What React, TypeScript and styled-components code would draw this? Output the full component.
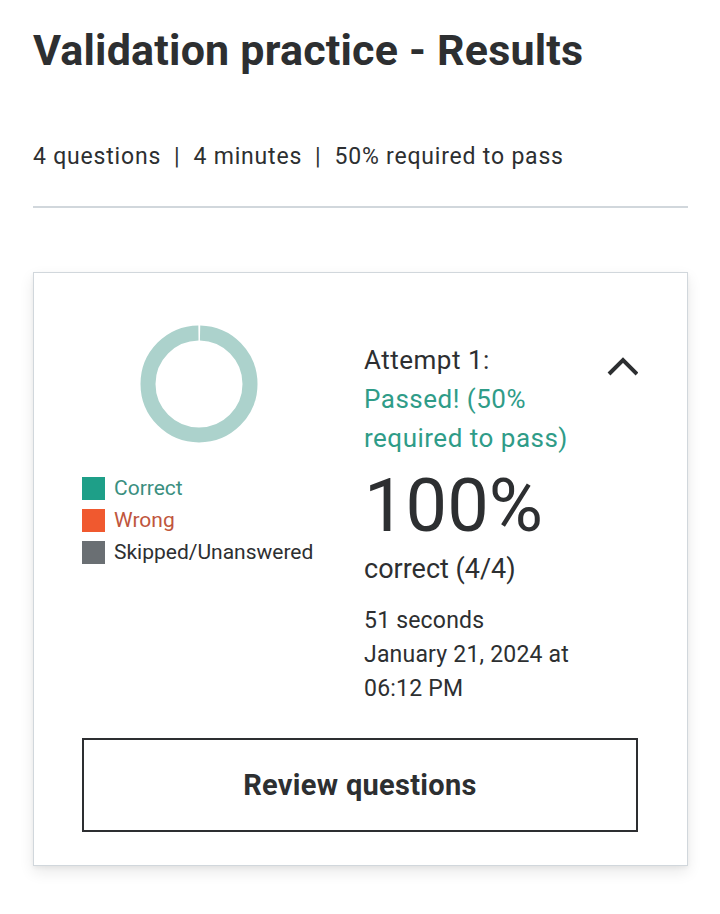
import React from "react";
import styled, { createGlobalStyle } from "styled-components";

const GlobalStyle = createGlobalStyle`
  html, body {
    margin: 0;
    padding: 0;
    background: #ffffff;
  }
  body {
    font-family: Roboto, "Liberation Sans", sans-serif;
    color: #2d2f31;
  }
`;

const Page = styled.div`
  padding: 24px 32px 40px 33px;
`;

const Title = styled.h1`
  margin: 0;
  font-size: 43px;
  line-height: 52px;
  font-weight: 700;
  letter-spacing: 0.2px;
  color: #2d2f31;
`;

const Meta = styled.div`
  display: flex;
  align-items: center;
  margin-top: 67px;
  font-size: 23px;
  line-height: 28px;
  letter-spacing: 0.8px;
  color: #2d2f31;
`;

const Sep = styled.span`
  margin: 0 13px;
`;

const Divider = styled.hr`
  margin: 35px 0 0;
  border: none;
  border-top: 2px solid #d1d7dc;
`;

const Card = styled.section`
  margin-top: 64px;
  border: 1px solid #d1d7dc;
  box-shadow: 0 6px 14px rgba(0, 0, 0, 0.09), 0 2px 4px rgba(0, 0, 0, 0.05);
  padding: 52px 49px 33px 48px;
  background: #fff;
`;

const Summary = styled.div`
  display: grid;
  grid-template-columns: 234px 1fr;
  column-gap: 48px;
`;

const ChartCol = styled.div`
  display: flex;
  flex-direction: column;
`;

const DonutWrap = styled.div`
  display: flex;
  justify-content: center;
`;

const Legend = styled.ul`
  list-style: none;
  margin: 34px 0 0;
  padding: 0;
  display: flex;
  flex-direction: column;
  gap: 9px;
`;

const LegendItem = styled.li<{ $text: string }>`
  display: flex;
  align-items: center;
  gap: 9px;
  font-size: 21px;
  line-height: 23px;
  color: ${(p) => p.$text};
  white-space: nowrap;
`;

const Swatch = styled.span<{ $color: string }>`
  width: 23px;
  height: 23px;
  background: ${(p) => p.$color};
  flex: none;
`;

const ResultCol = styled.div`
  position: relative;
  padding-top: 16px;
`;

const Heading = styled.div`
  font-size: 26px;
  line-height: 39px;
  letter-spacing: 0.5px;
  color: #2d2f31;
  padding-right: 50px;
`;

const Passed = styled.span`
  display: block;
  color: #2f9c88;
`;

const Toggle = styled.button`
  position: absolute;
  top: 24px;
  right: 0;
  width: 34px;
  height: 36px;
  border: none;
  background: none;
  padding: 0;
  display: flex;
  align-items: center;
  justify-content: center;
  cursor: pointer;
`;

const Score = styled.div`
  margin-top: 12px;
  font-size: 74px;
  line-height: 72px;
  font-weight: 400;
  letter-spacing: 0;
  color: #2d2f31;
`;

const ScoreLabel = styled.div`
  margin-top: 10px;
  font-size: 27px;
  line-height: 34px;
`;

const Details = styled.div`
  margin-top: 18px;
  font-size: 23px;
  line-height: 34px;
  letter-spacing: 0.2px;
`;

const ReviewButton = styled.button`
  display: block;
  margin-top: 32px;
  width: 100%;
  height: 94px;
  background: #fff;
  border: 2px solid #2d2f31;
  font-family: Roboto, "Liberation Sans", sans-serif;
  font-size: 29px;
  font-weight: 700;
  color: #2d2f31;
  letter-spacing: 0.3px;
  cursor: pointer;
`;

function Donut() {
  const r = 51;
  const c = 2 * Math.PI * r;
  const gap = 2.2;
  return (
    <svg width="118" height="118" viewBox="0 0 118 118">
      <circle
        cx="59"
        cy="59"
        r={r}
        fill="none"
        stroke="#acd2cc"
        strokeWidth="15"
        strokeDasharray={`${c - gap} ${gap}`}
        strokeDashoffset={-gap / 2}
        transform="rotate(-90 59 59)"
      />
    </svg>
  );
}

const legend = [
  { label: "Correct", color: "#1e9f88", text: "#3a8f80" },
  { label: "Wrong", color: "#f0592f", text: "#c0563d" },
  { label: "Skipped/Unanswered", color: "#6a6f73", text: "#2d2f31" },
];

export default function App() {
  return (
    <>
      <GlobalStyle />
      <Page>
        <Title>Validation practice - Results</Title>
        <Meta>
          <span>4 questions</span>
          <Sep>|</Sep>
          <span>4 minutes</span>
          <Sep>|</Sep>
          <span>50% required to pass</span>
        </Meta>
        <Divider />
        <Card>
          <Summary>
            <ChartCol>
              <DonutWrap>
                <Donut />
              </DonutWrap>
              <Legend>
                {legend.map((l) => (
                  <LegendItem key={l.label} $text={l.text}>
                    <Swatch $color={l.color} />
                    {l.label}
                  </LegendItem>
                ))}
              </Legend>
            </ChartCol>
            <ResultCol>
              <Heading>
                Attempt 1:
                <Passed>Passed! (50% required to pass)</Passed>
              </Heading>
              <Toggle aria-label="Collapse">
                <svg width="34" height="22" viewBox="0 0 34 22">
                  <path
                    d="M5 18 L19 4 L33 18"
                    fill="none"
                    stroke="#2d2f31"
                    strokeWidth="4"
                  />
                </svg>
              </Toggle>
              <Score>100%</Score>
              <ScoreLabel>correct (4/4)</ScoreLabel>
              <Details>
                <div>51 seconds</div>
                <div>January 21, 2024 at</div>
                <div>06:12 PM</div>
              </Details>
            </ResultCol>
          </Summary>
          <ReviewButton>Review questions</ReviewButton>
        </Card>
      </Page>
    </>
  );
}
